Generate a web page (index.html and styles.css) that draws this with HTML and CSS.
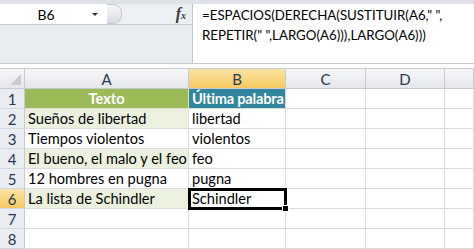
FILE: index.html
```html
<!DOCTYPE html>
<html lang="es">
<head>
    <meta charset="UTF-8">
    <title>Última palabra</title>
    <link rel="stylesheet" href="styles.css">
</head>
<body>
    <div class="formula-bar">
        <div class="formula-left">
            <div class="name-row">
                <div class="name-box">
                    <span class="cell-ref">B6</span>
                    <span class="arrow"></span>
                </div>
                <div class="grip"></div>
                <span class="fx"><i>f</i><small>x</small></span>
            </div>
        </div>
        <div class="formula-text">
            <div>=ESPACIOS(DERECHA(SUSTITUIR(A6," ",</div>
            <div>REPETIR(" ",LARGO(A6))),LARGO(A6)))</div>
        </div>
    </div>

    <div class="sheet">
        <div class="corner"><span class="tri"></span></div>
        <div class="col-head">A</div>
        <div class="col-head active">B</div>
        <div class="col-head">C</div>
        <div class="col-head">D</div>
        <div class="col-head last"></div>

        <div class="row-head">1</div>
        <div class="cell head-green">Texto</div>
        <div class="cell head-blue">Última palabra</div>
        <div class="cell"></div><div class="cell"></div><div class="cell"></div>

        <div class="row-head">2</div>
        <div class="cell band">Sueños de libertad</div>
        <div class="cell">libertad</div>
        <div class="cell"></div><div class="cell"></div><div class="cell"></div>

        <div class="row-head">3</div>
        <div class="cell">Tiempos violentos</div>
        <div class="cell">violentos</div>
        <div class="cell"></div><div class="cell"></div><div class="cell"></div>

        <div class="row-head">4</div>
        <div class="cell band">El bueno, el malo y el feo</div>
        <div class="cell">feo</div>
        <div class="cell"></div><div class="cell"></div><div class="cell"></div>

        <div class="row-head">5</div>
        <div class="cell">12 hombres en pugna</div>
        <div class="cell">pugna</div>
        <div class="cell"></div><div class="cell"></div><div class="cell"></div>

        <div class="row-head active">6</div>
        <div class="cell band">La lista de Schindler</div>
        <div class="cell selected">Schindler<span class="handle"></span></div>
        <div class="cell"></div><div class="cell"></div><div class="cell"></div>

        <div class="row-head">7</div>
        <div class="cell"></div><div class="cell"></div>
        <div class="cell"></div><div class="cell"></div><div class="cell"></div>

        <div class="row-head">8</div>
        <div class="cell"></div><div class="cell"></div>
        <div class="cell"></div><div class="cell"></div><div class="cell"></div>
    </div>
</body>
</html>
```

FILE: styles.css
```css
body {
    margin: 0;
    width: 474px;
    height: 249px;
    overflow: hidden;
    background-color: #fff;
    font-family: Lato, "Open Sans", sans-serif;
    color: #000;
}

.formula-bar {
    display: flex;
    height: 59px;
    border-top: 4px solid #dfe3e8;
    border-bottom: 1px solid #c6cbd3;
    background-color: #e8ebef;
}

.formula-left {
    width: 193px;
    border-right: 1px solid #c3c8cf;
    box-sizing: border-box;
}

.name-row {
    display: flex;
    align-items: center;
    height: 20px;
    border-bottom: 1px solid #c6cbd3;
    background-color: #eceff3;
}

.name-box {
    display: flex;
    align-items: center;
    width: 108px;
    height: 20px;
    background-color: #fff;
    border-right: 1px solid #c6cbd3;
    box-sizing: border-box;
}

.cell-ref {
    width: 92px;
    text-align: center;
    font-size: 14px;
}

.arrow {
    width: 0;
    height: 0;
    border-left: 3px solid transparent;
    border-right: 3px solid transparent;
    border-top: 3px solid #333;
}

.grip {
    width: 14px;
    height: 18px;
    margin-left: -1px;
    border-radius: 0 9px 9px 0;
    background: linear-gradient(#f6f7f9, #d9dde3);
    border: 1px solid #c1c6ce;
    border-left: none;
}

.fx {
    margin-left: auto;
    margin-right: 6px;
    font-family: "Liberation Serif", serif;
    font-size: 16px;
    font-weight: bold;
    color: #3a3a3a;
}

.fx small {
    font-size: 10px;
    font-style: italic;
}

.formula-text {
    flex: 1;
    background-color: #fff;
    padding: 1px 0 0 9px;
    font-size: 13.3px;
    line-height: 20px;
}

.sheet {
    display: grid;
    grid-template-columns: 25px 164px 97px 80px 79px 1fr;
    grid-auto-rows: 20px;
    margin-top: 4px;
    border-top: 1px solid #c6cbd3;
    font-size: 14.6px;
}

.corner,
.col-head,
.row-head {
    display: flex;
    align-items: center;
    justify-content: center;
    background: linear-gradient(#f6f7f9, #e4e7eb);
    border-right: 1px solid #c6cbd3;
    border-bottom: 1px solid #c6cbd3;
    color: #27374f;
    font-size: 15px;
}

.row-head {
    background: #e9ecf0;
    border-bottom-color: #d5d9df;
}

.corner {
    position: relative;
}

.tri {
    position: absolute;
    right: 3px;
    bottom: 3px;
    width: 0;
    height: 0;
    border-left: 11px solid transparent;
    border-bottom: 11px solid #c8ccd2;
}

.col-head.active,
.row-head.active {
    background: linear-gradient(#fbe4a5, #f5c95e);
    color: #2a3a50;
}

.cell {
    border-right: 1px solid #dadcdd;
    border-bottom: 1px solid #dadcdd;
    padding-left: 3px;
    line-height: 19px;
    white-space: nowrap;
    overflow: visible;
}

.band {
    background-color: #ebf1de;
}

.head-green {
    background-color: #9bbb59;
    color: #fff;
    font-weight: bold;
    text-align: center;
    padding-left: 0;
}

.head-blue {
    background-color: #31859c;
    color: #fff;
    font-weight: bold;
    letter-spacing: -0.2px;
}

.selected {
    position: relative;
    outline: 3px solid #000;
    outline-offset: -2px;
}

.handle {
    position: absolute;
    right: -4px;
    bottom: -4px;
    width: 5px;
    height: 5px;
    background-color: #000;
    border: 1px solid #fff;
}
```
